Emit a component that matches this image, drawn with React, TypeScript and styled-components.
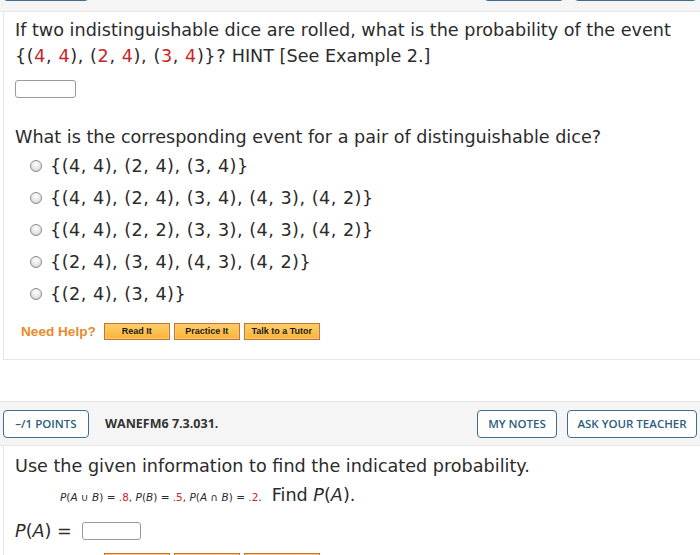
import React from "react";
import styled, { createGlobalStyle } from "styled-components";

const Global = createGlobalStyle`
  html, body { margin: 0; padding: 0; background: #fff; }
  body { width: 700px; height: 555px; overflow: hidden; }
`;

const Page = styled.div`
  width: 700px;
  height: 555px;
  overflow: hidden;
  font-family: "DejaVu Sans", Verdana, sans-serif;
  color: #2b2b2b;
`;

const HeaderBar = styled.div<{ $clipped?: boolean }>`
  display: flex;
  align-items: ${(p) => (p.$clipped ? "flex-end" : "center")};
  gap: 10px;
  box-sizing: border-box;
  height: ${(p) => (p.$clipped ? "12px" : "45px")};
  padding: ${(p) => (p.$clipped ? "0 3px 10px 3px" : "0 3px")};
  overflow: hidden;
  background: #f5f5f5;
  border-top: ${(p) => (p.$clipped ? "none" : "1px solid #e4e4e4")};
  border-bottom: 1px solid #e8e8e8;
  font-family: "Open Sans", "Noto Sans", sans-serif;
`;

const OutlineButton = styled.div<{ $w: number }>`
  flex: none;
  box-sizing: border-box;
  width: ${(p) => p.$w}px;
  height: 28px;
  display: flex;
  align-items: center;
  justify-content: center;
  border: 1.5px solid #3d6e91;
  border-radius: 4px;
  background: #fff;
  color: #2c5c80;
  font-size: 11.5px;
  font-weight: 600;
`;

const Spacer = styled.div`
  flex: 1;
`;

const QuestionId = styled.div`
  margin-left: 6px;
  font-size: 12.5px;
  font-weight: 700;
  color: #333;
`;

const Panel = styled.div<{ $h: number }>`
  box-sizing: border-box;
  height: ${(p) => p.$h}px;
  margin-left: 3px;
  border-left: 1px solid #e6e6e6;
  border-bottom: 1px solid #e6e6e6;
  padding: 5px 0 0 11px;
  font-size: 17.6px;
`;

const Line = styled.div`
  line-height: 26px;
  white-space: nowrap;
`;

const SetText = styled.span`
  letter-spacing: 0.6px;
`;

const Red = styled.span`
  color: #c8262c;
`;

const AnswerBox = styled.div<{ $w: number }>`
  display: inline-block;
  box-sizing: border-box;
  width: ${(p) => p.$w}px;
  height: 18px;
  border: 1px solid #9a9a9a;
  border-radius: 3px;
  background: #fff;
  vertical-align: middle;
`;

const BoxRow = styled.div`
  height: 18px;
  margin: 9px 0 0 0;
`;

const SubQuestion = styled.div`
  margin-top: 28px;
  line-height: 26px;
  white-space: nowrap;
`;

const Options = styled.div`
  display: flex;
  flex-direction: column;
`;

const Option = styled.div`
  display: flex;
  align-items: center;
  height: 32px;
  padding-left: 15px;
  white-space: nowrap;
  letter-spacing: 0.5px;
`;

const Radio = styled.span`
  display: inline-block;
  flex: none;
  width: 12px;
  height: 12px;
  margin-right: 8px;
  border-radius: 50%;
  border: 1px solid #8c8c8c;
  background: radial-gradient(circle at 50% 35%, #ffffff 0%, #e6e6e6 55%, #c4c4c4 100%);
  box-sizing: border-box;
`;

const HelpRow = styled.div`
  display: flex;
  align-items: center;
  gap: 4px;
  height: 22px;
  margin-top: 10px;
  padding-left: 6px;
`;

const NeedHelp = styled.span`
  font-family: "Liberation Sans", Arial, sans-serif;
  font-weight: 700;
  font-size: 13.6px;
  color: #e88a2a;
  margin-right: 4px;
`;

const HelpButton = styled.span<{ $w: number }>`
  box-sizing: border-box;
  flex: none;
  width: ${(p) => p.$w}px;
  height: 17px;
  display: flex;
  align-items: center;
  justify-content: center;
  border: 1px solid #c9761f;
  outline: 1px solid #f3c58a;
  outline-offset: -2px;
  background: linear-gradient(#ffcf66, #fbb33b);
  font-family: "Liberation Sans", Arial, sans-serif;
  font-weight: 700;
  font-size: 9px;
  color: #1a1a1a;
`;

const Gap = styled.div`
  height: 41px;
`;

const Panel2 = styled.div`
  margin-left: 3px;
  border-left: 1px solid #e6e6e6;
  padding: 7px 0 0 11px;
  font-size: 17.6px;
`;

const FormulaRow = styled.div`
  display: flex;
  align-items: baseline;
  margin-top: 6px;
  padding-left: 45px;
  height: 26px;
  white-space: nowrap;
`;

const Small = styled.span`
  font-size: 10.5px;
  margin-right: 10px;
`;

const I = styled.i`
  font-style: italic;
`;

const AnswerRow = styled.div`
  display: flex;
  align-items: center;
  gap: 10px;
  margin-top: 7px;
  height: 26px;
`;

const BottomButtons = styled.div`
  display: flex;
  gap: 4px;
  margin-top: 9px;
  padding-left: 89px;
`;

const options: string[] = [
  "{(4, 4), (2, 4), (3, 4)}",
  "{(4, 4), (2, 4), (3, 4), (4, 3), (4, 2)}",
  "{(4, 4), (2, 2), (3, 3), (4, 3), (4, 2)}",
  "{(2, 4), (3, 4), (4, 3), (4, 2)}",
  "{(2, 4), (3, 4)}",
];

export default function App() {
  return (
    <Page>
      <Global />
      <HeaderBar $clipped>
        <OutlineButton $w={86} />
        <Spacer />
        <OutlineButton $w={80} />
        <OutlineButton $w={123} />
      </HeaderBar>
      <Panel $h={348}>
        <Line>If two indistinguishable dice are rolled, what is the probability of the event</Line>
        <Line>
          <SetText>
            {"{("}<Red>4</Red>, <Red>4</Red>{"), ("}<Red>2</Red>, <Red>4</Red>{"), ("}<Red>3</Red>, <Red>4</Red>{")}"}?
          </SetText>{" "}
          HINT [See Example 2.]
        </Line>
        <BoxRow>
          <AnswerBox $w={61} />
        </BoxRow>
        <SubQuestion>What is the corresponding event for a pair of distinguishable dice?</SubQuestion>
        <Options>
          {options.map((o, i) => (
            <Option key={i}>
              <Radio />
              {o}
            </Option>
          ))}
        </Options>
        <HelpRow>
          <NeedHelp>Need Help?</NeedHelp>
          <HelpButton $w={66}>Read It</HelpButton>
          <HelpButton $w={66}>Practice It</HelpButton>
          <HelpButton $w={76}>Talk to a Tutor</HelpButton>
        </HelpRow>
      </Panel>
      <Gap />
      <HeaderBar>
        <OutlineButton $w={86}>–/1 POINTS</OutlineButton>
        <QuestionId>WANEFM6 7.3.031.</QuestionId>
        <Spacer />
        <OutlineButton $w={80}>MY NOTES</OutlineButton>
        <OutlineButton $w={130}>ASK YOUR TEACHER</OutlineButton>
      </HeaderBar>
      <Panel2>
        <Line>Use the given information to find the indicated probability.</Line>
        <FormulaRow>
          <Small>
            <I>P</I>(<I>A</I> ∪ <I>B</I>) = <Red>.8</Red>, <I>P</I>(<I>B</I>) = <Red>.5</Red>, <I>P</I>(<I>A</I> ∩ <I>B</I>) = <Red>.2</Red>.
          </Small>
          <span>
            Find <I>P</I>(<I>A</I>).
          </span>
        </FormulaRow>
        <AnswerRow>
          <span>
            <I>P</I>(<I>A</I>) =
          </span>
          <AnswerBox $w={59} />
        </AnswerRow>
        <BottomButtons>
          <HelpButton $w={66} />
          <HelpButton $w={66} />
          <HelpButton $w={76} />
        </BottomButtons>
      </Panel2>
    </Page>
  );
}
